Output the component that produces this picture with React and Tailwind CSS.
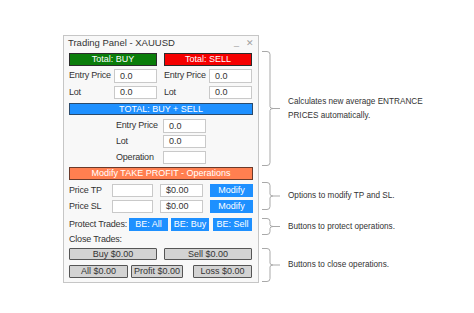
import React from "react";

const font = { fontFamily: '"Liberation Sans", Arial, sans-serif' };

const Btn = ({ children, className = "" }) => (
  <div
    className={`shrink-0 flex items-center justify-center border text-[9px] leading-none whitespace-nowrap ${className}`}
  >
    {children}
  </div>
);

const Field = ({ value = "", className = "" }) => (
  <div
    className={`shrink-0 flex items-center bg-white border border-[#c9c9c9] pl-[5px] text-[9px] leading-none text-[#333] ${className}`}
  >
    {value}
  </div>
);

const Bracket = ({ height }) => {
  const mid = height / 2;
  return (
    <svg width="20" height={height} className="shrink-0">
      <path
        d={`M1 0.5 H6 Q9 0.5 9 3.5 V${mid - 2} Q9 ${mid} 12 ${mid} H19 M12 ${mid} Q9 ${mid} 9 ${mid + 2} V${height - 3.5} Q9 ${height - 0.5} 6 ${height - 0.5} H1`}
        fill="none"
        stroke="#a9a9a9"
        strokeWidth="1"
      />
    </svg>
  );
};

const Note = ({ height, children, className = "" }) => (
  <div className={`flex items-center ${className}`} style={{ height }}>
    <Bracket height={height} />
    <div className="ml-[7px] text-[8.2px] leading-[14px] text-[#333] whitespace-nowrap">{children}</div>
  </div>
);

const Label = ({ children, className = "" }) => (
  <div className={`shrink-0 flex items-center whitespace-nowrap text-[9px] tracking-[-0.2px] ${className}`}>
    {children}
  </div>
);

const App = () => {
  return (
    <div className="w-[474px] h-[313px] bg-white flex overflow-hidden" style={font}>
      {/* panel */}
      <div className="shrink-0 ml-[63px] mt-[35px] w-[196px] h-[248px] border border-[#c6c6c6] bg-[#f8f8f8] flex flex-col px-[5px] text-[#333]">
        <div className="h-[15px] flex items-center justify-between text-[9.5px] -ml-[1px]">
          <span>Trading Panel - XAUUSD</span>
          <span className="flex items-center gap-[7px] text-[#a0a0a0] text-[9px] -mr-[1px]">
            <span className="leading-none -mt-[2px]">_</span>
            <span>✕</span>
          </span>
        </div>

        <div className="mt-[2px] flex gap-[7px] h-[13px]">
          <Btn className="w-[88px] bg-[#0a7d0a] border-[#2b2b2b] text-white">Total: BUY</Btn>
          <Btn className="w-[88px] bg-[#f50000] border-[#2b2b2b] text-white">Total: SELL</Btn>
        </div>

        <div className="mt-[3px] flex h-[14px]">
          <Label className="w-[45px]">Entry Price</Label>
          <Field value="0.0" className="w-[43px]" />
          <Label className="w-[45px] ml-[7px]">Entry Price</Label>
          <Field value="0.0" className="w-[43px]" />
        </div>
        <div className="mt-[3px] flex h-[13px]">
          <Label className="w-[45px]">Lot</Label>
          <Field value="0.0" className="w-[43px]" />
          <Label className="w-[45px] ml-[7px]">Lot</Label>
          <Field value="0.0" className="w-[43px]" />
        </div>

        <Btn className="mt-[4px] h-[12px] bg-[#1e90ff] border-[#2b4a6b] text-white">
          TOTAL: BUY + SELL
        </Btn>

        <div className="mt-[4px] flex h-[14px] pl-[47px]">
          <Label className="w-[47px]">Entry Price</Label>
          <Field value="0.0" className="w-[43px]" />
        </div>
        <div className="mt-[2px] flex h-[13px] pl-[47px]">
          <Label className="w-[47px]">Lot</Label>
          <Field value="0.0" className="w-[43px]" />
        </div>
        <div className="mt-[3px] flex h-[13px] pl-[47px]">
          <Label className="w-[47px]">Operation</Label>
          <Field className="w-[43px]" />
        </div>

        <Btn className="mt-[3px] h-[13px] bg-[#ff7f50] border-[#6b3a2a] text-white">
          Modify TAKE PROFIT - Operations
        </Btn>

        <div className="mt-[4px] flex h-[13px]">
          <Label className="w-[43px]">Price TP</Label>
          <Field className="w-[41px]" />
          <Field value="$0.00" className="w-[43px] ml-[7px]" />
          <Btn className="w-[43px] ml-[7px] bg-[#1e90ff] border-[#1e90ff] text-white">Modify</Btn>
        </div>
        <div className="mt-[3px] flex h-[13px]">
          <Label className="w-[43px]">Price SL</Label>
          <Field className="w-[41px]" />
          <Field value="$0.00" className="w-[43px] ml-[7px]" />
          <Btn className="w-[43px] ml-[7px] bg-[#1e90ff] border-[#1e90ff] text-white">Modify</Btn>
        </div>

        <div className="mt-[5px] flex h-[13px]">
          <Label className="w-[60px]">Protect Trades:</Label>
          <Btn className="w-[39px] bg-[#1e90ff] border-[#1e90ff] text-white">BE: All</Btn>
          <Btn className="w-[38px] ml-[3px] bg-[#1e90ff] border-[#1e90ff] text-white">BE: Buy</Btn>
          <Btn className="w-[39px] ml-[4px] bg-[#1e90ff] border-[#1e90ff] text-white">BE: Sell</Btn>
        </div>

        <Label className="mt-[3px] h-[11px]">Close Trades:</Label>

        <div className="mt-[3px] flex gap-[7px] h-[12px]">
          <Btn className="w-[88px] bg-[#d3d3d3] border-[#555] rounded-[1px] text-[#333]">Buy $0.00</Btn>
          <Btn className="w-[88px] bg-[#d3d3d3] border-[#555] rounded-[1px] text-[#333]">Sell $0.00</Btn>
        </div>
        <div className="mt-[5px] flex h-[13px]">
          <Btn className="w-[59px] bg-[#d3d3d3] border-[#555] rounded-[1px] text-[#333]">All $0.00</Btn>
          <Btn className="w-[52px] ml-[3px] bg-[#d3d3d3] border-[#555] rounded-[1px] text-[#333]">Profit $0.00</Btn>
          <Btn className="w-[59px] ml-[10px] bg-[#d3d3d3] border-[#555] rounded-[1px] text-[#333]">Loss $0.00</Btn>
        </div>
      </div>

      {/* annotations */}
      <div className="ml-[2px] flex flex-col">
        <Note height={115} className="mt-[51px]">
          Calculates new average ENTRANCE
          <br />
          PRICES automatically.
        </Note>
        <Note height={28} className="mt-[16px]">Options to modify TP and SL.</Note>
        <Note height={17} className="mt-[8px]">Buttons to protect operations.</Note>
        <Note height={34} className="mt-[13px]">Buttons to close operations.</Note>
      </div>
    </div>
  );
};

export default App;
